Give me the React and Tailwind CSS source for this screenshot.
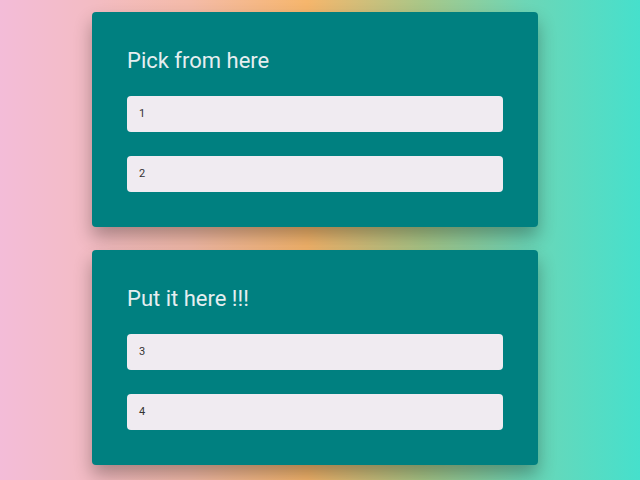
import React from 'react';

const lists = [
  { title: 'Pick from here', items: ['1', '2'] },
  { title: 'Put it here !!!', items: ['3', '4'] },
];

const App = () => {
  return (
    <div className="min-h-[480px] w-[640px] bg-[linear-gradient(to_right,#f3bcd8_0%,#f3bcc4_14%,#f4bba8_30%,#f6b66c_48%,#a9c788_66%,#6dd6b6_82%,#46e0cc_100%)] pt-[12px] font-['Roboto',sans-serif]">
      {lists.map((list) => (
        <div
          key={list.title}
          className="ml-[92px] mb-[23px] w-[446px] rounded-[4px] bg-[#008080] px-[35px] pt-[36px] pb-[35px] shadow-[0_10px_18px_rgba(0,0,0,0.3)]"
        >
          <h2 className="text-[22px] leading-[26px] text-[#e6eef0] mb-[22px]">{list.title}</h2>
          <div className="flex flex-col gap-[24px]">
            {list.items.map((item) => (
              <div
                key={item}
                className="h-[36px] rounded-[4px] bg-[#f0ebf1] px-[12px] flex items-center text-[11px] text-[#333]"
              >
                {item}
              </div>
            ))}
          </div>
        </div>
      ))}
    </div>
  );
};

export default App;
